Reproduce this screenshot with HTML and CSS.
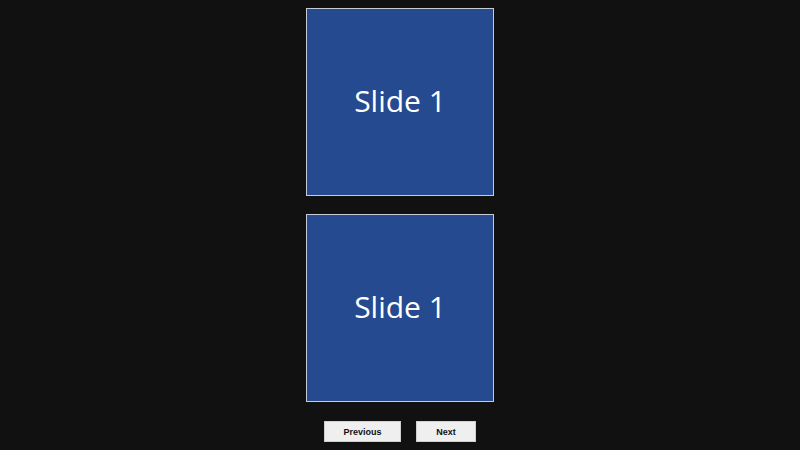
FILE: index.html
```html
<!DOCTYPE html>
<html lang="en">
<head>
    <meta charset="UTF-8">
    <title>Slides</title>
    <link rel="stylesheet" href="styles.css">
</head>
<body>
    <div class="viewer">
        <div class="slide">Slide 1</div>
        <div class="slide">Slide 1</div>
        <div class="controls">
            <button class="nav-btn">Previous</button>
            <button class="nav-btn">Next</button>
        </div>
    </div>
</body>
</html>
```

FILE: styles.css
```css
body {
    margin: 0;
    padding: 8px 0;
    background: #111111;
    font-family: "Open Sans", sans-serif;
}

.viewer {
    display: flex;
    flex-direction: column;
    align-items: center;
    gap: 18px;
}

.slide {
    box-sizing: border-box;
    width: 188px;
    height: 188px;
    padding-bottom: 4px;
    border: 1px solid #c8ccd6;
    background: #264a8f;
    color: #ffffff;
    font-size: 30px;
    font-weight: 500;
    display: flex;
    align-items: center;
    justify-content: center;
}

.controls {
    display: flex;
    gap: 15px;
    margin-top: 1px;
}

.nav-btn {
    height: 21px;
    padding: 0 16px;
    border: 1px solid #cfcfcf;
    background: #efefef;
    color: #111111;
    font-family: "Liberation Sans", Arial, sans-serif;
    font-weight: bold;
    font-size: 9px;
}

.nav-btn:first-child {
    width: 77px;
}

.nav-btn:last-child {
    width: 60px;
}
```
